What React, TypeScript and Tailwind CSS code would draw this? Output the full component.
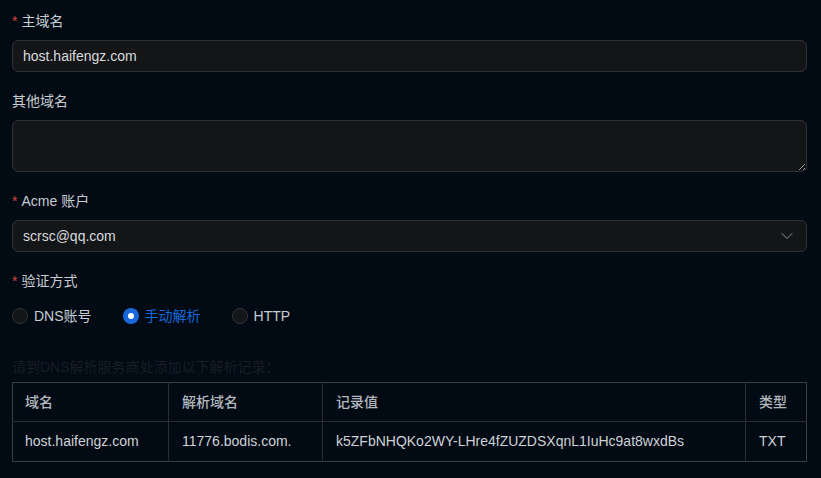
import { ChevronDown } from "lucide-react";

type FieldProps = {
  label: string,
  required?: boolean,
  children: React.ReactNode,
}

function Field({label, required, children}: FieldProps) {
  return (
    <div className="mb-[18px]">
      <div className="h-[22px] leading-[22px] mb-2 text-[14px] text-[#c9cdd3]">
        {required ? <span className="text-[#d8453f] mr-1">*</span> : ""}
        {label}
      </div>
      {children}
    </div>
  )
}

const options = [
  { key: "dns", label: "DNS账号" },
  { key: "manual", label: "手动解析" },
  { key: "http", label: "HTTP" },
];

const records = [
  { domain: "host.haifengz.com", host: "11776.bodis.com.", value: "k5ZFbNHQKo2WY-LHre4fZUZDSXqnL1IuHc9at8wxdBs", type: "TXT" },
];

export default function App() {
  const selected = "manual";

  return (
    <div
      className="w-[821px] h-[478px] bg-[#020a14] pl-3 pr-[14px] pt-[10px] overflow-hidden"
      style={{ fontFamily: '"Liberation Sans", Arial, "Noto Sans CJK SC", sans-serif' }}
    >
      <Field label="主域名" required>
        <div className="h-8 rounded-md border border-[#2e3136] bg-[#131517] px-[10px] flex items-center text-[14px] text-[#d9dbde]">
          host.haifengz.com
        </div>
      </Field>

      <Field label="其他域名">
        <textarea className="block w-full h-[52px] rounded-md border border-[#2e3136] bg-[#131517] px-[10px] py-1 text-[14px] text-[#d9dbde] outline-none" />
      </Field>

      <Field label="Acme 账户" required>
        <div className="h-8 rounded-md border border-[#2e3136] bg-[#131517] pl-[10px] pr-[9px] flex items-center justify-between text-[14px] text-[#d9dbde]">
          <span>scrsc@qq.com</span>
          <ChevronDown size={20} strokeWidth={1.2} className="text-[#8a8f96]" />
        </div>
      </Field>

      <div>
        <div className="h-[22px] leading-[22px] mb-2 text-[14px] text-[#c9cdd3]">
          <span className="text-[#d8453f] mr-1">*</span>验证方式
        </div>
        <div className="h-8 flex items-center gap-[31px] text-[14px]">
          {options.map(opt =>
            <label key={opt.key} className="flex items-center gap-1.5">
              {opt.key == selected ?
                <span className="w-4 h-4 rounded-full bg-[#1668dc] flex items-center justify-center">
                  <span className="w-[6px] h-[6px] rounded-full bg-white"></span>
                </span>
                :
                <span className="w-4 h-4 rounded-full bg-[#141517] border border-[#303338]"></span>
              }
              <span className={opt.key == selected ? "text-[#1668dc]" : "text-[#c9cdd3]"}>{opt.label}</span>
            </label>
          )}
        </div>
      </div>

      <div className="mt-6 mb-1 h-[22px] leading-[22px] text-[14px] text-[#181e26]">
        请到DNS解析服务商处添加以下解析记录：
      </div>

      <table className="w-[795px] border-collapse border border-[#3a3d41] text-[14px] text-left">
        <thead>
          <tr className="h-[39px] text-[#b3b8bf]">
            <th className="font-medium px-3 border-r border-[#2a2e33] w-[156px]">域名</th>
            <th className="font-medium px-[13px] border-r border-[#2a2e33] w-[154px]">解析域名</th>
            <th className="font-medium px-[13px] border-r border-[#2a2e33] w-[423px]">记录值</th>
            <th className="font-medium px-[13px]">类型</th>
          </tr>
        </thead>
        <tbody>
          {records.map(r =>
            <tr key={r.domain} className="h-10 border-t border-[#2a2e33] text-[#cfd2d6]">
              <td className="px-3 border-r border-[#2a2e33]">{r.domain}</td>
              <td className="px-[13px] border-r border-[#2a2e33]">{r.host}</td>
              <td className="px-[13px] border-r border-[#2a2e33]">{r.value}</td>
              <td className="px-[13px]">{r.type}</td>
            </tr>
          )}
        </tbody>
      </table>
    </div>
  )
}
